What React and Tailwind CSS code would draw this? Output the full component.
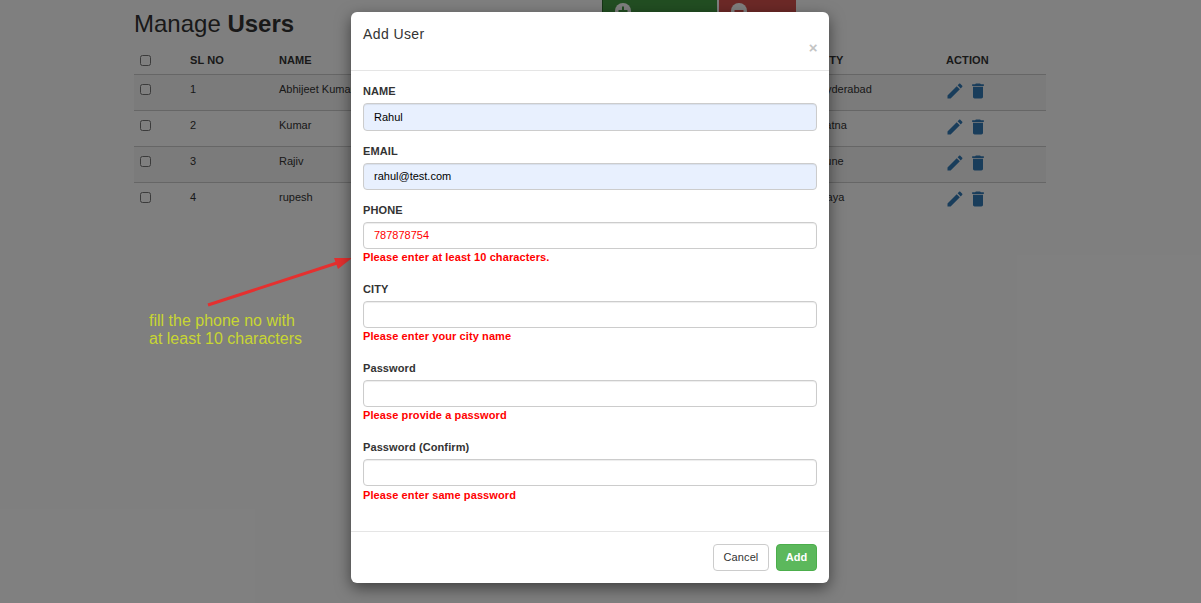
import React from "react";

const rows = [
  ["1", "Abhijeet Kumar", "Hyderabad", "bg-[#f7f7f7]"],
  ["2", "Kumar", "Patna", ""],
  ["3", "Rajiv", "Pune", "bg-[#f7f7f7]"],
  ["4", "rupesh", "Gaya", ""],
];

const cols = "grid grid-cols-[56px_89px_539px_128px_100px]";

function Check() {
  return <input type="checkbox" readOnly className="w-[11px] h-[11px] m-0 block" />;
}

function Pencil() {
  return (
    <svg viewBox="0 0 24 24" className="w-5 h-5 fill-[#337ab7]">
      <path d="M3 17.25V21h3.75L17.81 9.94l-3.75-3.75L3 17.25zM20.71 7.04c.39-.39.39-1.02 0-1.41l-2.34-2.34c-.39-.39-1.02-.39-1.41 0l-1.83 1.83 3.75 3.75 1.83-1.83z" />
    </svg>
  );
}

function Trash() {
  return (
    <svg viewBox="0 0 24 24" className="w-5 h-5 fill-[#337ab7]">
      <path d="M6 19c0 1.1.9 2 2 2h8c1.1 0 2-.9 2-2V7H6v12zM19 4h-3.5l-1-1h-5l-1 1H5v2h14V4z" />
    </svg>
  );
}

function Field({ label, value, error, inputClass = "", h = "h-[27px]", mb = "mb-[18px]", errClass = "mt-px" }) {
  return (
    <div className={mb}>
      <div className="h-[14px] leading-[14px] text-[11px] font-bold tracking-[0.1px] text-[#333] mb-[5px]">{label}</div>
      <input
        readOnly
        value={value}
        className={`block w-full ${h} px-[10px] border border-[#ccc] rounded-[4px] text-[11px] outline-none shadow-[inset_0_1px_1px_rgba(0,0,0,0.075)] ${inputClass}`}
      />
      {error && (
        <div className={`h-[14px] leading-[14px] text-[11px] font-bold tracking-[0.1px] text-[#f00] ${errClass}`}>{error}</div>
      )}
    </div>
  );
}

export default function App() {
  return (
    <div className="relative w-[1201px] h-[603px] overflow-hidden bg-white font-['Liberation_Sans',Arial,sans-serif] text-[#333]">
      <div className="pl-[134px] w-[1046px]">
        <div className="h-[12px] overflow-hidden flex gap-[2px] pl-[468px]">
          <div className="w-[115px] h-[30px] bg-[#449d44] border-l border-[#2a6a2a] pl-3 pt-[3px]">
            <svg viewBox="0 0 16 16" className="w-4 h-4">
              <circle cx="8" cy="8" r="8" fill="#fff" />
              <path d="M8 3.5v9M3.5 8h9" stroke="#449d44" strokeWidth="2" />
            </svg>
          </div>
          <div className="w-[77px] h-[30px] bg-[#d9534f] pl-3 pt-[3px]">
            <svg viewBox="0 0 16 16" className="w-4 h-4">
              <circle cx="8" cy="8" r="8" fill="#fff" />
              <path d="M3.5 8h9" stroke="#d9534f" strokeWidth="2" />
            </svg>
          </div>
        </div>
        <div className="h-[27px] mt-[-2px] leading-[27px] text-[24px] text-[#333]">
          Manage <b>Users</b>
        </div>
        <div className={`${cols} h-[27px] mt-[-4px] items-center border-b border-[#ccc] pt-[14px] text-[11px] font-bold tracking-[0.1px] box-content`}>
          <div className="pl-[6px]"><Check /></div>
          <div>SL NO</div>
          <div>NAME</div>
          <div>CITY</div>
          <div>ACTION</div>
        </div>
        {rows.map(([n, name, city, bg], i) => (
          <div key={n} className={`${cols} h-[36px] ${i < 3 ? "border-b border-[#ccc]" : ""} text-[11px] ${bg}`}>
            <div className="pl-[6px] pt-[9px]"><Check /></div>
            <div className="pt-[7px] leading-[14px]">{n}</div>
            <div className="pt-[7px] leading-[14px]">{name}</div>
            <div className="pt-[7px] leading-[14px]">{city}</div>
            <div className="pt-[6px] flex gap-[2.5px] -ml-px">
              <Pencil />
              <Trash />
            </div>
          </div>
        ))}
      </div>

      <div className="absolute inset-0 bg-black/50" />

      <svg className="absolute left-[200px] top-[250px] w-[155px] h-[60px]" viewBox="0 0 155 60">
        <line x1="8" y1="55" x2="137" y2="13" stroke="#e5302f" strokeWidth="3" />
        <polygon points="152,8 134,8 138,19" fill="#e5302f" />
      </svg>
      <div className="absolute left-[149px] top-[312px] text-[16px] leading-[18px] text-[#c8d632]">
        fill the phone no with
        <br />
        at least 10 characters
      </div>

      <div className="absolute left-[351px] top-[12px] w-[478px] h-[571px] bg-white rounded-[6px] shadow-[0_5px_15px_rgba(0,0,0,0.5)] flex flex-col">
        <div className="relative h-[59px] shrink-0 border-b border-[#e5e5e5] px-3 pt-[13px] text-[14px] leading-[18px] tracking-[0.4px]">
          Add User
          <span className="absolute right-[11px] top-[29px] text-[15px] leading-[14px] font-bold text-[#c4c4c4]">×</span>
        </div>
        <div className="flex-1 px-3 pt-[13px]">
          <Field label="NAME" value="Rahul" h="h-[28px]" mb="mb-[13px]" inputClass="bg-[#e8f0fe] text-black" />
          <Field label="EMAIL" value="rahul@test.com" mb="mb-[13px]" inputClass="bg-[#e8f0fe] text-black pb-[2px]" />
          <Field label="PHONE" value="787878754" error="Please enter at least 10 characters." inputClass="text-[#f00] pb-[2px]" />
          <Field label="CITY" value="" error="Please enter your city name" />
          <Field label="Password" value="" error="Please provide a password" />
          <Field label="Password (Confirm)" value="" error="Please enter same password" errClass="mt-[2px]" mb="" />
        </div>
        <div className="h-[52px] shrink-0 border-t border-[#e5e5e5] px-3 pt-3 flex justify-end gap-[7px]">
          <button className="w-[56px] h-[27px] border border-[#ccc] rounded-[4px] bg-white text-[11px] tracking-[0.1px] text-[#333]">Cancel</button>
          <button className="w-[41px] h-[27px] border border-[#4cae4c] rounded-[4px] bg-[#5cb85c] text-[11px] font-bold text-white">Add</button>
        </div>
      </div>
    </div>
  );
}
